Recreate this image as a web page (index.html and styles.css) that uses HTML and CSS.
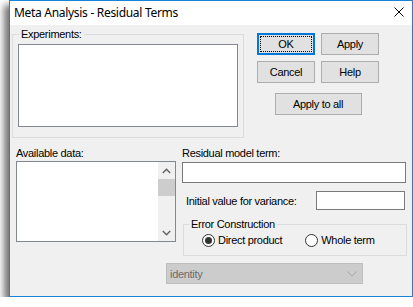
FILE: index.html
```html
<!DOCTYPE html>
<html lang="en">
<head>
  <meta charset="UTF-8">
  <title>Meta Analysis - Residual Terms</title>
  <link rel="stylesheet" href="styles.css">
</head>
<body>

  <div class="window">
    <div class="titlebar">
      <span class="title">Meta Analysis - Residual Terms</span>
      <svg class="close" width="10" height="10" viewBox="0 0 10 10">
        <path d="M0.5 0.5 L9.5 9.5 M9.5 0.5 L0.5 9.5" stroke="#000" stroke-width="1" fill="none"/>
      </svg>
    </div>

    <div class="content">
      <div class="top">
        <fieldset class="group experiments">
          <legend>Experiments:</legend>
          <div class="listbox exp-list"></div>
        </fieldset>

        <div class="buttons">
          <div class="btn-row">
            <button class="btn default"><span class="focus">OK</span></button>
            <button class="btn">Apply</button>
          </div>
          <div class="btn-row">
            <button class="btn">Cancel</button>
            <button class="btn">Help</button>
          </div>
          <button class="btn wide">Apply to all</button>
        </div>
      </div>

      <div class="bottom">
        <div class="left">
          <div class="label">Available data:</div>
          <div class="listbox data-list">
            <div class="scrollbar">
              <div class="arrow">
                <svg width="9" height="6" viewBox="0 0 9 6"><path d="M0.8 5 L4.5 1.3 L8.2 5" stroke="#606060" stroke-width="1.4" fill="none"/></svg>
              </div>
              <div class="thumb"></div>
              <div class="track"></div>
              <div class="arrow">
                <svg width="9" height="6" viewBox="0 0 9 6"><path d="M0.8 1 L4.5 4.7 L8.2 1" stroke="#606060" stroke-width="1.4" fill="none"/></svg>
              </div>
            </div>
          </div>
        </div>

        <div class="right">
          <div class="label">Residual model term:</div>
          <div class="textbox term"></div>

          <div class="variance-row">
            <span class="label">Initial value for variance:</span>
            <div class="textbox variance"></div>
          </div>

          <fieldset class="group construction">
            <legend>Error Construction</legend>
            <div class="radios">
              <label class="radio"><span class="dot checked"></span>Direct product</label>
              <label class="radio"><span class="dot"></span>Whole term</label>
            </div>
          </fieldset>
        </div>
      </div>

      <div class="combo">
        <span>identity</span>
        <svg width="10" height="6" viewBox="0 0 10 6"><path d="M0.5 0.5 L5 5 L9.5 0.5" stroke="#a8a8a8" stroke-width="1" fill="none"/></svg>
      </div>
    </div>
  </div>

</body>
</html>
```

FILE: styles.css
```css
html, body {
  margin: 0;
  padding: 0;
  background: white;
}
body {
  font-family: "Liberation Sans", Arial, sans-serif;
  font-size: 11px;
  letter-spacing: -0.3px;
  color: #000;
}
.window {
  margin-left: 9px;
  width: 404px;
  height: 297px;
  box-sizing: border-box;
  border: 1px solid #1883d7;
  background: #f0f0f0;
  box-shadow: -5px 5px 7px rgba(0, 0, 0, 0.55);
  display: flex;
  flex-direction: column;
}
.titlebar {
  height: 24px;
  background: white;
  display: flex;
  align-items: center;
  justify-content: space-between;
  padding-left: 4px;
  padding-right: 8px;
}
.title {
  font-family: "Noto Sans", sans-serif;
  font-size: 12px;
  letter-spacing: -0.3px;
  line-height: 24px;
}
.close {
  display: block;
  margin-bottom: 2px;
}
.content {
  flex: 1;
  display: flex;
  flex-direction: column;
}
.top {
  display: flex;
  align-items: flex-start;
}
.group {
  margin: 0;
  border: 1px solid #dcdcdc;
  padding: 0;
  min-width: 0;
}
.group legend {
  padding: 0 2px;
  line-height: 12px;
}
.experiments {
  width: 232px;
  box-sizing: border-box;
  margin: 3px 0 0 2px;
  padding: 4px 5px 10px 5px;
}
.experiments legend {
  margin-left: 1px;
}
.listbox {
  background: white;
  border: 1px solid #828790;
  box-sizing: border-box;
}
.exp-list {
  height: 83px;
}
.buttons {
  margin-left: 13px;
  margin-top: 8px;
  display: flex;
  flex-direction: column;
  align-items: center;
}
.btn-row {
  display: flex;
  gap: 6px;
  margin-bottom: 6px;
}
.btn {
  width: 58px;
  height: 22px;
  box-sizing: border-box;
  background: #e1e1e1;
  border: 1px solid #adadad;
  font-family: "Liberation Sans", Arial, sans-serif;
  font-size: 11px;
  letter-spacing: -0.3px;
  color: #000;
  padding: 0;
  display: flex;
  align-items: center;
  justify-content: center;
}
.btn.default {
  border: 2px solid #0078d7;
  padding: 1px;
}
.btn .focus {
  flex: 1;
  align-self: stretch;
  display: flex;
  align-items: center;
  justify-content: center;
  outline: 1px dotted #000;
  outline-offset: -1px;
}
.btn.wide {
  width: 87px;
  margin-top: 4px;
}
.bottom {
  display: flex;
  margin-top: 9px;
  padding-left: 6px;
  gap: 6px;
}
.label {
  line-height: 12px;
  white-space: nowrap;
}
.left {
  width: 160px;
}
.data-list {
  margin-top: 2px;
  height: 81px;
  display: flex;
  justify-content: flex-end;
}
.scrollbar {
  width: 17px;
  background: #f0f0f0;
  display: flex;
  flex-direction: column;
}
.arrow {
  height: 17px;
  display: flex;
  align-items: center;
  justify-content: center;
}
.thumb {
  height: 17px;
  background: #cdcdcd;
}
.track {
  flex: 1;
}
.right {
  width: 224px;
}
.textbox {
  background: white;
  border: 1px solid #7a7a7a;
  box-sizing: border-box;
}
.term {
  margin-top: 3px;
  height: 21px;
}
.variance-row {
  margin-top: 8px;
  display: flex;
  align-items: center;
  justify-content: space-between;
  padding-left: 4px;
  padding-right: 1px;
}
.variance {
  width: 89px;
  height: 19px;
}
.construction {
  margin-top: 8px;
  margin-left: 1px;
  width: 224px;
  box-sizing: border-box;
  padding: 4px 0 8px 0;
}
.construction legend {
  margin-left: 5px;
}
.radios {
  display: flex;
  padding-left: 18px;
}
.radio {
  display: flex;
  align-items: center;
  gap: 3px;
  line-height: 13px;
}
.radio + .radio {
  margin-left: 23px;
}
.dot {
  width: 13px;
  height: 13px;
  box-sizing: border-box;
  border: 1px solid #333;
  border-radius: 50%;
  background: white;
  display: flex;
  align-items: center;
  justify-content: center;
}
.dot.checked::after {
  content: "";
  width: 7px;
  height: 7px;
  border-radius: 50%;
  background: #333;
}
.combo {
  margin-top: 7px;
  margin-left: 156px;
  width: 197px;
  height: 21px;
  box-sizing: border-box;
  background: #cccccc;
  border: 1px solid #bfbfbf;
  color: #6d6d6d;
  display: flex;
  align-items: center;
  justify-content: space-between;
  padding: 0 5px 0 3px;
}
```
